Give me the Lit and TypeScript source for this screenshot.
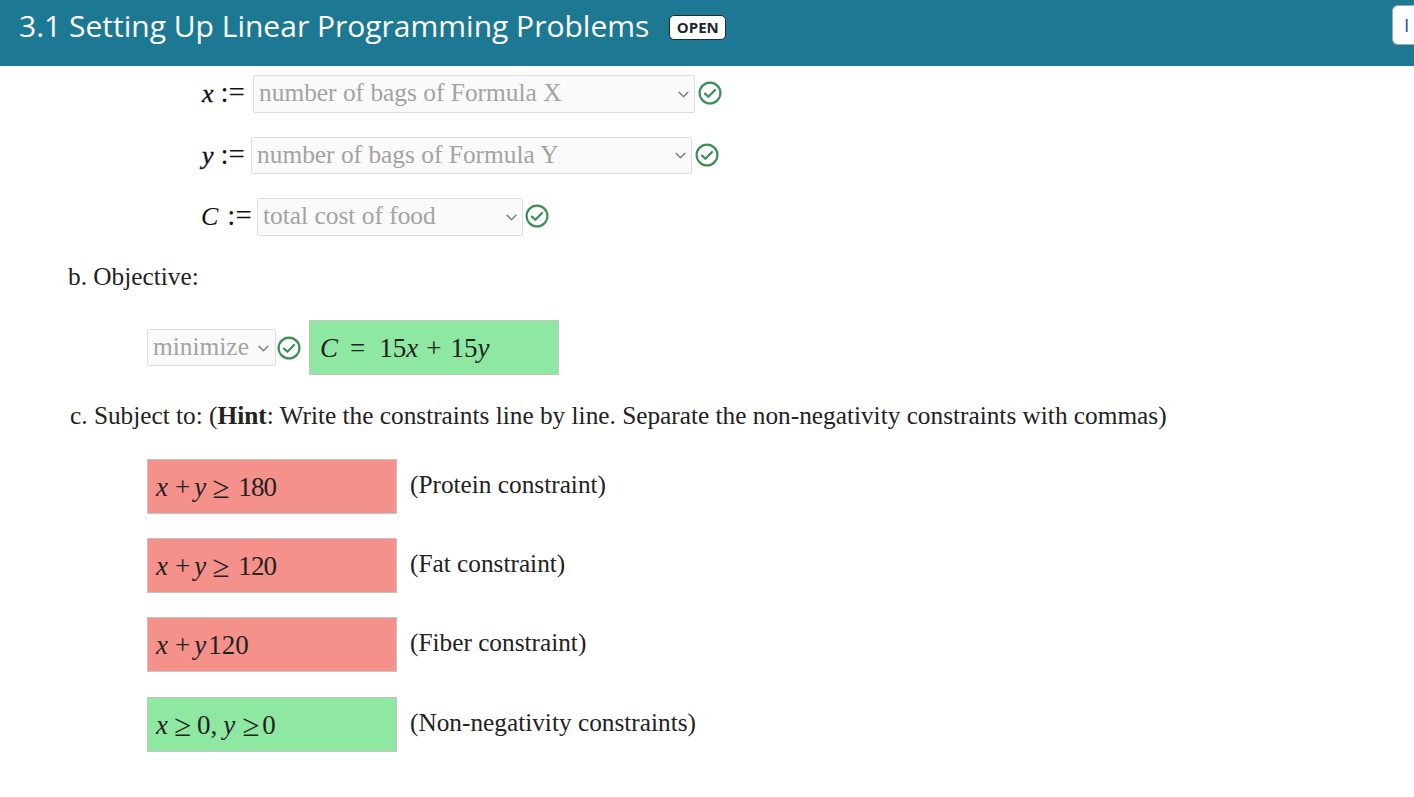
import { LitElement, html, css, svg } from "lit";
import { customElement } from "lit/decorators.js";

const check = html`<svg class="check" viewBox="0 0 24 24" fill="none" stroke="#3d8f56" stroke-width="2.2" stroke-linecap="round" stroke-linejoin="round">${svg`<circle cx="12" cy="12" r="10.4"></circle><path d="M7 12.6l3.4 3.2L17 9"></path>`}</svg>`;
const chev = html`<svg class="chev" viewBox="0 0 10 6" fill="none" stroke="#808080" stroke-width="1.4" stroke-linecap="round" stroke-linejoin="round">${svg`<path d="M1 1l4 4 4-4"></path>`}</svg>`;

@customElement("app-root")
export class AppRoot extends LitElement {
  static styles = css`
    :host { display: block; width: 1414px; height: 797px; overflow: hidden; background: #fff; color: #222; font-family: "Liberation Serif", serif; }
    header { height: 66px; background: #1d7893; display: flex; align-items: center; padding: 0 0 16px 19px; box-sizing: border-box; position: relative; }
    h1 { margin: 0; font: 400 30px "Open Sans", sans-serif; color: #fff; white-space: nowrap; }
    .badge { margin-left: 20px; margin-top: 5px; background: #fff; color: #1c2530; border: 1px solid #222a33; border-radius: 5px; font: 700 15px/23px "Open Sans", sans-serif; text-align: center; width: 57px; height: 25px; box-sizing: border-box; }
    .side { position: absolute; right: 0; top: 5px; width: 22px; height: 40px; box-sizing: border-box; background: #fff; border: 1px solid #9ab; border-right: 0; border-radius: 6px 0 0 6px; color: #33409c; font: 400 19px/38px "Open Sans", sans-serif; padding-left: 11px; }
    main { display: flex; flex-direction: column; }
    .defs { display: flex; flex-direction: column; padding: 9px 0 0 201px; }
    .def { display: flex; align-items: center; }
    .def.a { height: 38px; }
    .def.b { height: 37px; margin-top: 24px; }
    .def.c { height: 38px; margin-top: 24px; }
    .lab { display: flex; align-items: baseline; font: 29px/1 "Liberation Serif", serif; white-space: nowrap; padding: 0 0 3px 1px; box-sizing: border-box; color: #111; }
    .lab i { font: italic 400 26px/1 "Liberation Serif", serif; -webkit-text-stroke: 0.35px #111; margin-right: 7px; }
    .def.c .lab { padding-left: 0; }
    .def.c .lab i { -webkit-text-stroke: 0; margin-right: 9px; }
    .def.a .lab { width: 52px; }
    .def.b .lab { width: 50px; }
    .def.c .lab { width: 56px; }
    .sel { height: 100%; box-sizing: border-box; display: flex; align-items: center; justify-content: space-between; background: #fafafa; border: 1px solid #dedede; border-radius: 2px; color: #a3a3a3; font-size: 25.4px; padding: 0 5px 3px 5px; white-space: nowrap; }
    .def.a .sel { width: 442px; }
    .def.b .sel { width: 441px; }
    .def.c .sel { width: 266px; }
    .chev { width: 11px; height: 7px; flex: none; margin-top: 3px; }
    .check { width: 24px; height: 24px; flex: none; margin-left: 2px; margin-bottom: 2px; }
    .def.a .check, .def.b .check { margin-left: 3px; }
    .head { font-size: 25.3px; line-height: 30px; white-space: nowrap; }
    .head.ob { margin: 25px 0 0 68px; }
    .objrow { display: flex; align-items: center; margin: 29px 0 0 147px; height: 55px; }
    .min { width: 129px; height: 37px; box-sizing: border-box; display: flex; align-items: center; justify-content: space-between; background: #fafafa; border: 1px solid #dedede; border-radius: 2px; color: #a3a3a3; font-size: 25.4px; padding: 0 6px 2px 5px; }
    .objrow .check { margin: 0 8px 0 1px; }
    .box { width: 250px; height: 55px; box-sizing: border-box; border: 1px solid #c4c4c4; display: flex; align-items: center; font-size: 27px; white-space: pre; padding: 2px 0 0 8px; color: #222; }
    .box.green.obj { padding-left: 10px; }
    .green { background: #8fe8a2; }
    .red { background: #f5918b; }
    .rel { font-size: 31px; line-height: 1; }
    .num { letter-spacing: -0.8px; }
    .s2 { margin-left: 2px; }
    .s3 { margin-left: 3px; }
    .s4 { margin-left: 4px; }
    .s6 { margin-left: 6px; }
    .s7 { margin-left: 7px; }
    .s8 { margin-left: 8px; }
    .s9 { margin-left: 9px; }
    .s12 { margin-left: 12px; }
    .s14 { margin-left: 14px; }
    .head.su { margin: 25px 0 0 70px; }
    .list { display: flex; flex-direction: column; gap: 24.2px; margin: 29px 0 0 147px; }
    .con { display: flex; align-items: flex-start; }
    .note { margin: 9px 0 0 13px; font-size: 25.3px; line-height: 32px; white-space: nowrap; }
  `;
  render() {
    return html`
      <header>
        <h1>3.1 Setting Up Linear Programming Problems</h1>
        <span class="badge">OPEN</span>
        <span class="side">I</span>
      </header>
      <main>
        <div class="defs">
          <div class="def a"><span class="lab"><i>x</i>:=</span><div class="sel">number of bags of Formula X ${chev}</div>${check}</div>
          <div class="def b"><span class="lab"><i>y</i>:=</span><div class="sel">number of bags of Formula Y ${chev}</div>${check}</div>
          <div class="def c"><span class="lab"><i>C</i>:=</span><div class="sel">total cost of food ${chev}</div>${check}</div>
        </div>
        <div class="head ob">b. Objective:</div>
        <div class="objrow">
          <div class="min">minimize ${chev}</div>${check}
          <div class="box green obj"><i>C</i><span class="s12">=</span><span class="s14">15</span><i>x</i><span class="s8">+</span><span class="s9">15</span><i>y</i></div>
        </div>
        <div class="head su">c. Subject to: (<b>Hint</b>: Write the constraints line by line. Separate the non-negativity constraints with commas)</div>
        <div class="list">
          <div class="con"><div class="box red"><i>x</i><span class="s7">+</span><i class="s4">y</i><span class="s6 rel">≥</span><span class="s9 num">180</span></div><div class="note">(Protein constraint)</div></div>
          <div class="con"><div class="box red"><i>x</i><span class="s7">+</span><i class="s4">y</i><span class="s6 rel">≥</span><span class="s9 num">120</span></div><div class="note">(Fat constraint)</div></div>
          <div class="con"><div class="box red"><i>x</i><span class="s7">+</span><i class="s4">y</i><span class="s2">120</span></div><div class="note">(Fiber constraint)</div></div>
          <div class="con"><div class="box green"><i>x</i><span class="s6 rel">≥</span><span class="s6">0</span><span>,</span><i class="s6">y</i><span class="s7 rel">≥</span><span class="s3">0</span></div><div class="note">(Non-negativity constraints)</div></div>
        </div>
      </main>
    `;
  }
}
